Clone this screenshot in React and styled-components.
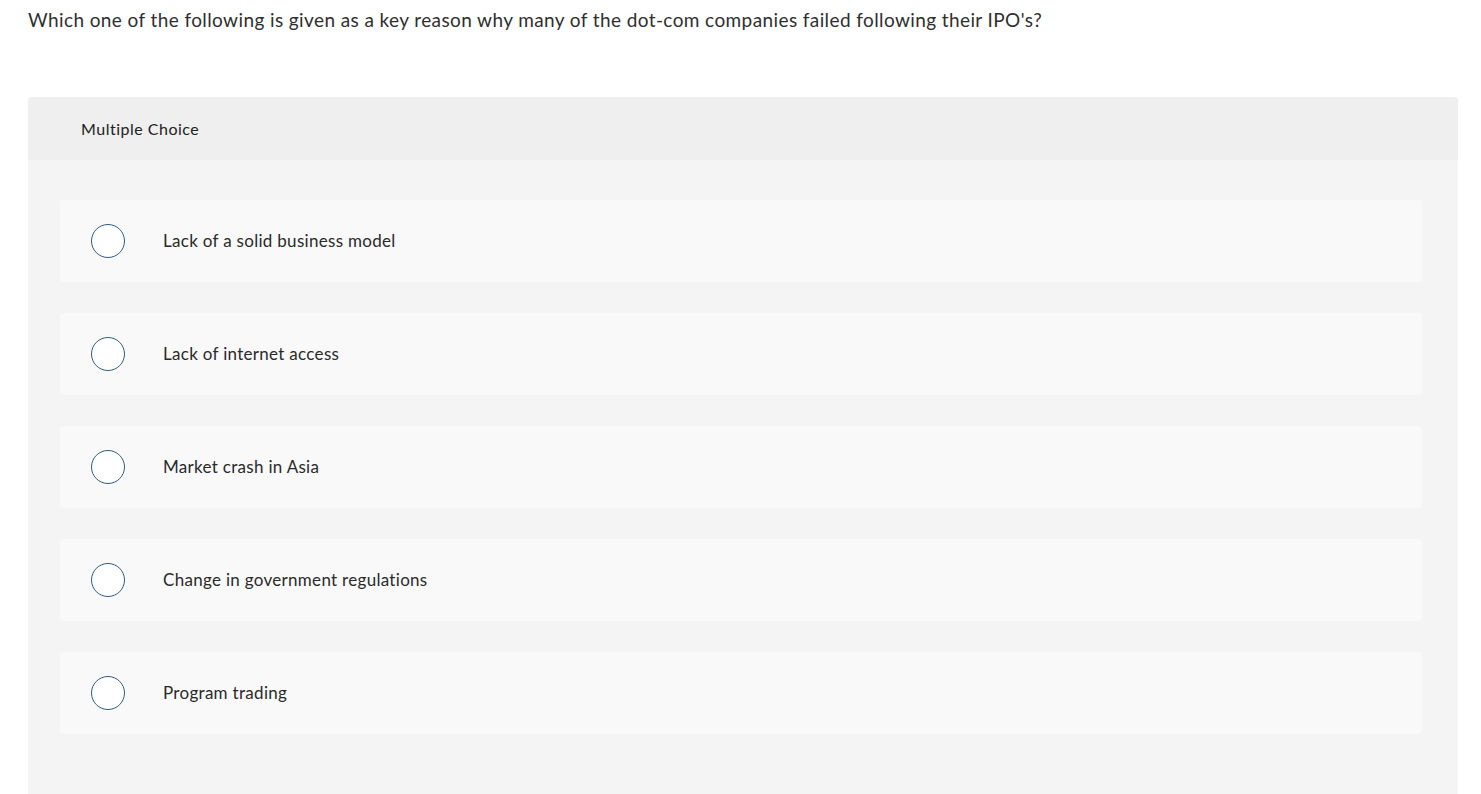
import { styled, createGlobalStyle } from "styled-components";

const GlobalStyle = createGlobalStyle`
  html, body {
    margin: 0;
    padding: 0;
    background: #ffffff;
  }
  body {
    font-family: "Lato", "Liberation Sans", sans-serif;
    color: #333333;
  }
`;

const choices = [
  { key: "a", label: "Lack of a solid business model" },
  { key: "b", label: "Lack of internet access" },
  { key: "c", label: "Market crash in Asia" },
  { key: "d", label: "Change in government regulations" },
  { key: "e", label: "Program trading" },
];

function App() {
  return (
    <>
      <GlobalStyle />
      <StPage>
        <StQuestion>
          Which one of the following is given as a key reason why many of the
          dot-com companies failed following their IPO's?
        </StQuestion>

        <StPanel>
          <StHeader>Multiple Choice</StHeader>
          <StList>
            {choices.map(({ key, label }) => (
              <StOption key={key}>
                <StRadio />
                <StLabel>{label}</StLabel>
              </StOption>
            ))}
          </StList>
        </StPanel>
      </StPage>
    </>
  );
}

export default App;

// styled-components
const StPage = styled.div`
  padding: 8px 23px 0 28px;
  height: 794px;
  box-sizing: border-box;
  display: flex;
  flex-direction: column;
`;

const StQuestion = styled.p`
  margin: 0;
  font-size: 19px;
  line-height: 24px;
  letter-spacing: 0.4px;
  color: #2f2f2f;
`;

const StPanel = styled.section`
  margin-top: 65px;
  flex: 1;
  background: #f4f4f4;
  border-radius: 4px 4px 0 0;
  overflow: hidden;
`;

const StHeader = styled.div`
  height: 63px;
  display: flex;
  align-items: center;
  padding-left: 53px;
  background: #efefef;
  font-size: 16px;
  letter-spacing: 0.5px;
  color: #222222;
`;

const StList = styled.ul`
  list-style: none;
  margin: 0;
  padding: 40px 36px 0 32px;
  display: flex;
  flex-direction: column;
  gap: 31px;
`;

const StOption = styled.li`
  height: 82px;
  display: flex;
  align-items: center;
  padding-left: 31px;
  background: #f9f9f9;
  border-radius: 4px;
`;

const StRadio = styled.span`
  width: 32px;
  height: 32px;
  border: 1.5px solid #2e5b86;
  border-radius: 50%;
  background: #ffffff;
  flex-shrink: 0;
`;

const StLabel = styled.span`
  margin-left: 38px;
  font-size: 17px;
  letter-spacing: 0.3px;
  color: #2a2a2a;
  position: relative;
  top: -1px;
`;
